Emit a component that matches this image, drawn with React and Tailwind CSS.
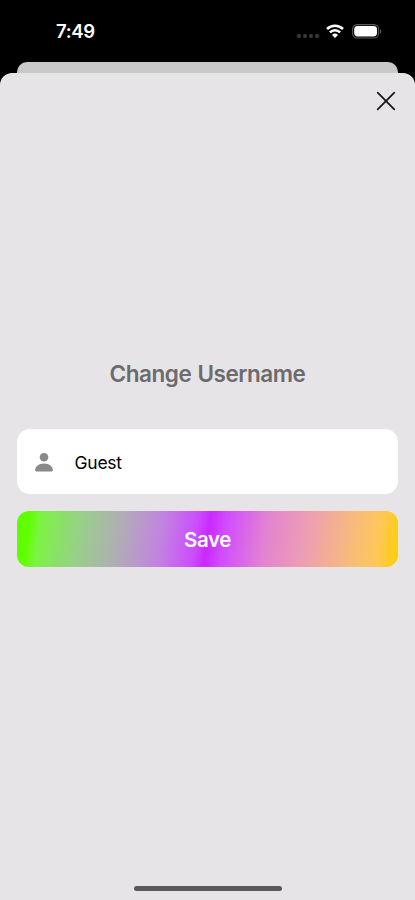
import React, { useState } from "react";

const StatusBar = () => (
  <div className="h-[62px] shrink-0 flex items-start justify-between pl-[56px] pr-[33px] text-white">
    <span className="mt-[18px] text-[18.5px] leading-[26px] font-semibold tracking-[-0.3px]">7:49</span>
    <div className="mt-[23px] h-4 flex items-center">
      <div className="flex gap-[2px] mt-[9px] mr-[7px]">
        <span className="w-1 h-1 rounded-full bg-[#3b3b3b]" />
        <span className="w-1 h-1 rounded-full bg-[#3b3b3b]" />
        <span className="w-1 h-1 rounded-full bg-[#3b3b3b]" />
        <span className="w-1 h-1 rounded-full bg-[#3b3b3b]" />
      </div>
      <svg className="w-[18px] h-[14px] mr-2" viewBox="0 0 18 14" fill="none" stroke="currentColor" strokeWidth="2.6">
        <path d="M1 5a11.4 11.4 0 0 1 16 0" />
        <path d="M3.9 8.3a7.2 7.2 0 0 1 10.2 0" />
        <path d="M9 14 6 11a4.3 4.3 0 0 1 6 0Z" fill="currentColor" stroke="none" />
      </svg>
      <svg className="w-[30px] h-[15px]" viewBox="0 0 30 15">
        <rect x="0.6" y="0.6" width="26" height="13.4" rx="4.6" fill="none" stroke="#5c5c5c" strokeWidth="1.1" />
        <rect x="2.2" y="2.1" width="22.8" height="10.4" rx="3.4" fill="currentColor" />
        <path d="M28 5.2v4.6c1.7-.7 1.7-3.9 0-4.6Z" fill="#5c5c5c" />
      </svg>
    </div>
  </div>
);

const App = () => {
  const [username, setUsername] = useState("Guest");

  return (
    <div className="w-full h-[900px] bg-black flex flex-col overflow-hidden font-['Inter',sans-serif]">
      <StatusBar />
      <div className="mx-[17px] h-[10.6px] shrink-0 rounded-t-[10px] bg-[#c9c9c9]" />

      <div className="flex-1 flex flex-col bg-[#e6e4e7] rounded-t-[12px] px-[17px]">
        <div className="flex justify-end pt-[18px] pr-[2px]">
          <button aria-label="Close" className="w-5 h-5">
            <svg viewBox="0 0 20 20" fill="none" stroke="#151515" strokeWidth="1.7" strokeLinecap="round">
              <path d="M1.7 1.7 18.3 18.3M18.3 1.7 1.7 18.3" />
            </svg>
          </button>
        </div>

        <h1 className="mt-[248.6px] text-center text-[22.5px] leading-[30px] font-[560] tracking-[-0.45px] [word-spacing:1px] text-[#6c6b6c]">
          Change Username
        </h1>

        <div className="mt-[40.2px] h-[65px] shrink-0 flex items-center rounded-[13px] bg-white pl-[18px]">
          <svg className="w-[18px] h-[20px] mr-[21.5px]" viewBox="0 0 18 20" fill="#8a898e">
            <circle cx="9" cy="5.2" r="4.3" />
            <path d="M1.6 19.4C.6 19.4.1 18.8.1 17.9c0-3.2 3.5-6.5 8.9-6.5s8.9 3.3 8.9 6.5c0 .9-.5 1.5-1.5 1.5Z" />
          </svg>
          <input
            value={username}
            onChange={(e) => setUsername(e.target.value)}
            className="min-w-0 flex-1 bg-transparent pt-[2px] text-[17.5px] tracking-[-0.25px] text-black outline-none"
          />
        </div>

        <button className="mt-[16.6px] h-[56px] shrink-0 rounded-[12px] pt-[2px] text-[20.5px] font-semibold tracking-[-0.35px] text-white bg-[linear-gradient(98deg,#5fff00_0%,#60ff00_3.5%,#7cf343_6.5%,#98cf8a_17%,#b0aeb4_27%,#c283e0_38%,#cb4cfc_47%,#cb28ff_50%,#d04bff_54%,#e383d0_65%,#ed9db4_75%,#f8bd76_88%,#ffc658_94%,#ffd000_100%)]">
          Save
        </button>

        <div className="mt-auto mb-[9px] w-[148px] h-[5px] self-center rounded-full bg-[#59585a]" />
      </div>
    </div>
  );
};

export default App;
